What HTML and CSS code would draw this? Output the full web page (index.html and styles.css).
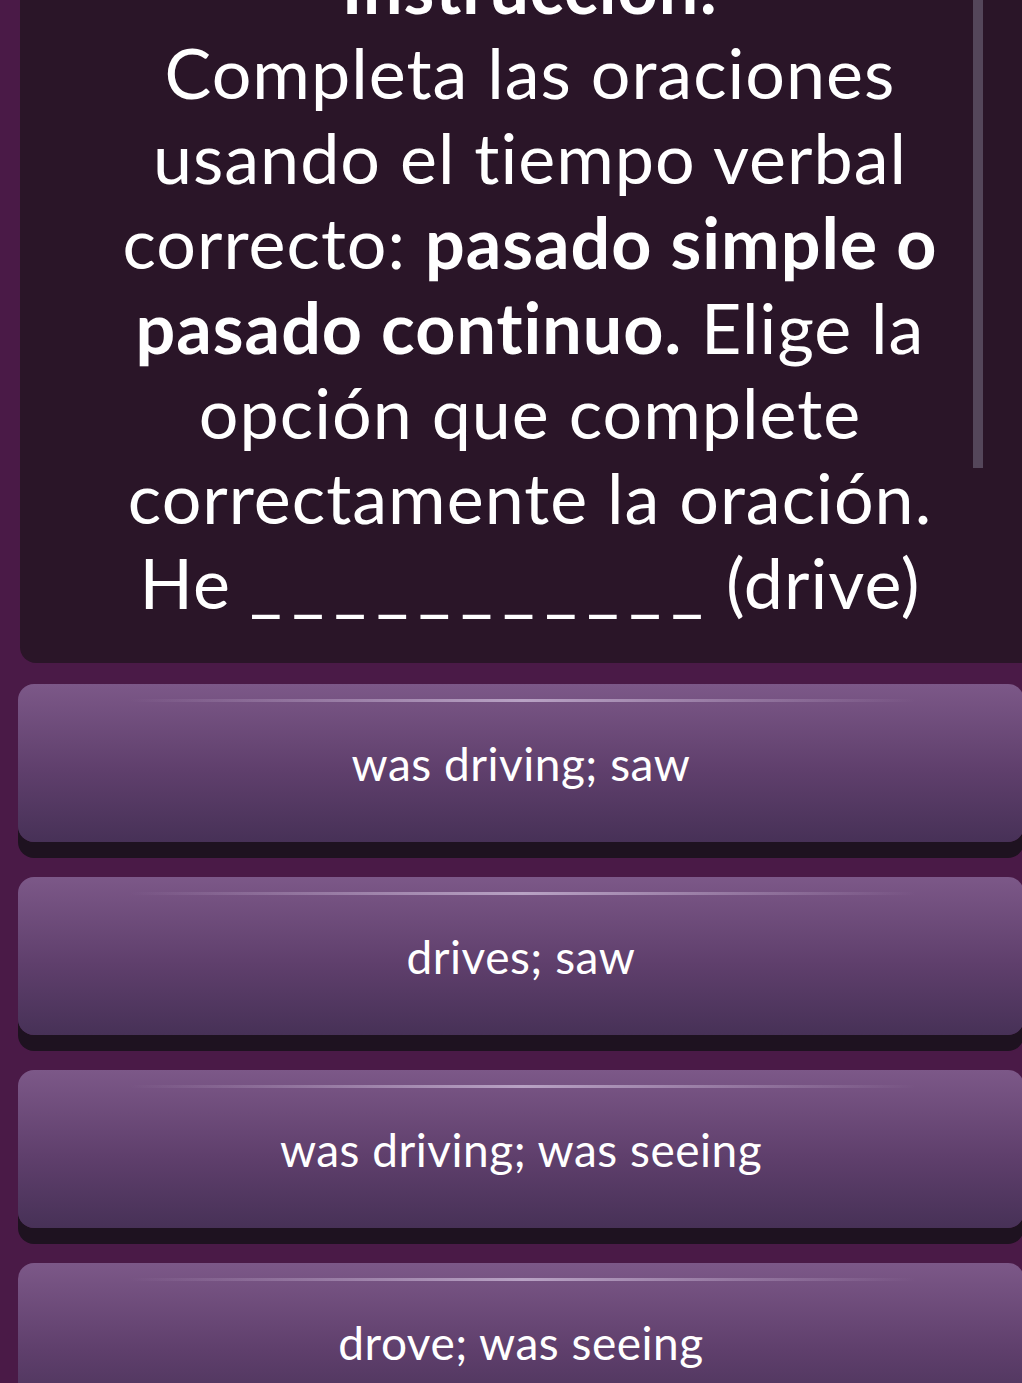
FILE: index.html
```
<!DOCTYPE html>
<html lang="es">
<head>
    <meta charset="UTF-8">
    <meta name="viewport" content="width=device-width, initial-scale=1.0">
    <title>Pasado simple o pasado continuo</title>
    <link rel="stylesheet" href="styles.css">
</head>
<body>
    <div class="quiz">
        <div class="question">
            <div class="scroll-bar"></div>
            <p class="question-text">
                <b>Instrucción:</b><br>
                Completa las oraciones<br>
                usando el tiempo verbal<br>
                correcto: <b>pasado simple o</b><br>
                <b>pasado continuo.</b> Elige la<br>
                opción que complete<br>
                correctamente la oración.<br>
                He <span class="blank">___________</span> (drive)
            </p>
        </div>

        <div class="options">
            <button class="option">was driving; saw</button>
            <button class="option">drives; saw</button>
            <button class="option">was driving; was seeing</button>
            <button class="option">drove; was seeing</button>
        </div>
    </div>
</body>
</html>
```

FILE: styles.css
```
* {
    margin: 0;
    padding: 0;
    box-sizing: border-box;
}

body {
    font-family: Lato, "Open Sans", sans-serif;
    background-color: #4a1a47;
    overflow: hidden;
    height: 1383px;
}

.quiz {
    width: 1040px;
    padding-left: 18px;
}

.question {
    position: relative;
    margin-top: -55px;
    margin-left: 2px;
    background: #2a1528;
    border-radius: 16px;
    padding-bottom: 38px;
    text-align: center;
}

.scroll-bar {
    position: absolute;
    left: 953px;
    top: 0;
    width: 10px;
    height: 523px;
    background: #54465a;
}

.question-text {
    color: #fff;
    font-size: 70px;
    line-height: 85px;
    letter-spacing: 1px;
    font-weight: 400;
}

.question-text b {
    font-weight: 700;
}

.blank {
    letter-spacing: 10px;
    margin-right: -6px;
}

.options {
    margin-top: 21px;
    display: flex;
    flex-direction: column;
    gap: 35px;
}

.option {
    position: relative;
    height: 158px;
    width: 1006px;
    border: none;
    border-radius: 16px;
    background: linear-gradient(to bottom, #7c5888, #5f3f6c 55%, #473157);
    box-shadow: 0 16px 0 #1e1220;
    color: #fff;
    font-family: inherit;
    font-size: 46px;
    letter-spacing: 0.5px;
    cursor: pointer;
}

.option::before {
    content: "";
    position: absolute;
    top: 15px;
    left: 112px;
    right: 108px;
    height: 3px;
    background: linear-gradient(to right, rgba(184, 162, 196, 0), #b8a2c4 50%, rgba(184, 162, 196, 0));
}
```
